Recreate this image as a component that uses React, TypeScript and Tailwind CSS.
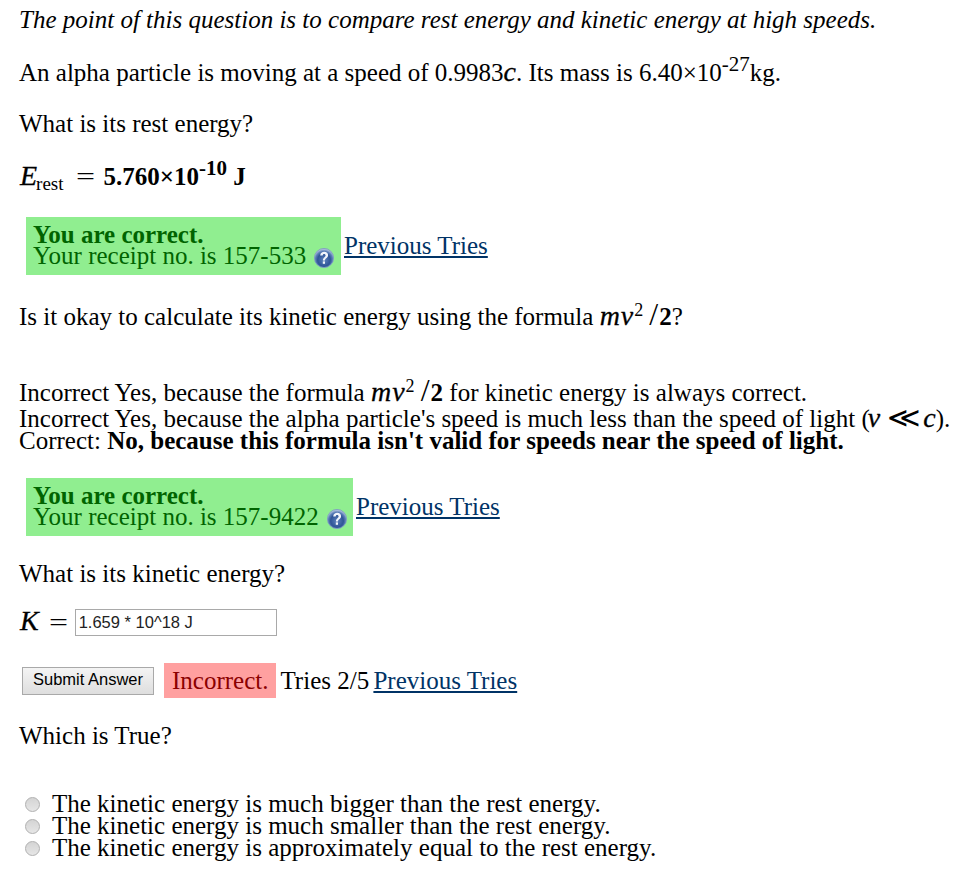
import React from "react";

const HelpIcon = ({ id }: { id: string }) => (
  <svg width="20" height="20" viewBox="0 0 20 20" className="inline-block align-[-4px] ml-[2px]">
    <defs>
      <radialGradient id={id} cx="50%" cy="60%" r="55%">
        <stop offset="0%" stopColor="#5d82bd" />
        <stop offset="60%" stopColor="#2f5597" />
        <stop offset="82%" stopColor="#5c7fb8" />
        <stop offset="100%" stopColor="#a9bcdb" />
      </radialGradient>
    </defs>
    <circle cx="10" cy="10" r="9.6" fill={`url(#${id})`} stroke="#7d97c4" strokeWidth="0.8" />
    <path d="M6.2 7.6 C6.2 5 8.2 3.8 10.2 3.8 C12.6 3.8 14.1 5.3 14.1 7.2 C14.1 9.8 11.1 10.2 10.9 12.4 L8.9 12.4 C8.9 9.4 11.6 9.2 11.6 7.4 C11.6 6.5 11 5.9 10.1 5.9 C9.2 5.9 8.7 6.6 8.7 7.6 Z" fill="#f2f5fb" />
    <rect x="8.8" y="13.4" width="2.2" height="2.4" fill="#f2f5fb" />
  </svg>
);

const Correct = ({ receipt, id, width }: { receipt: string; id: string; width: string }) => (
  <div className="flex items-start">
    <div className={`ml-[7px] bg-[#90ee90] text-[#006400] pl-[7px] pt-[7px] h-[58px] leading-[21px] ${width}`}>
      <b className="block">You are correct.</b>
      <span className="block whitespace-nowrap">
        Your receipt no. is {receipt} <HelpIcon id={id} />
      </span>
    </div>
    <a className="ml-[3px] mt-[18px] leading-[22px] text-[#003366] underline whitespace-nowrap">Previous Tries</a>
  </div>
);

const Radio = ({ label }: { label: string }) => (
  <div className="flex items-center h-[22px]">
    <span className="ml-[6px] mr-[12px] w-[15px] h-[15px] rounded-full border border-[#b0b0b0] bg-gradient-to-b from-[#d4d4d4] to-[#e6e6e6]" />
    <span className="whitespace-nowrap">{label}</span>
  </div>
);

const M = ({ children }: { children: React.ReactNode }) => (
  <i className="text-[28px] leading-[0] [-webkit-text-stroke:0.3px_black]">{children}</i>
);

const Eq = () => <span className="inline-block w-[19px] text-center scale-x-[1.35] leading-[0]">=</span>;

const Mv2 = () => (
  <>
    <i className="text-[28px] leading-[0] tracking-[1px] [-webkit-text-stroke:0.3px_black]">mv</i>
    <sup className="text-[18px] leading-[0]">2</sup>
    <span className="inline-block w-[11px] ml-[5px] text-center text-[32px] leading-[0]">/</span>
    <b>2</b>
  </>
);

export default function App() {
  return (
    <div className="w-[979px] h-[875px] overflow-hidden bg-white text-black pl-[19px] text-[25px] leading-[22px] [font-family:'Liberation_Serif',serif]">
      <p className="pt-[9px] italic whitespace-nowrap">The point of this question is to compare rest energy and kinetic energy at high speeds.</p>
      <p className="mt-[31px] whitespace-nowrap">
        An alpha particle is moving at a speed of 0.9983<M>c</M>. Its mass is 6.40×10<sup className="text-[21px] leading-[0]">-27</sup>kg.
      </p>
      <p className="mt-[29px]">What is its rest energy?</p>
      <p className="mt-[31px] whitespace-nowrap">
        <i className="text-[28px] leading-[0] ml-[1px] [-webkit-text-stroke:0.3px_black]">E</i>
        <sub className="text-[19px] leading-[0] -ml-[1px]">rest</sub>
        <span className="ml-[12px] mr-[9px]"><Eq /></span>
        <b>5.760×10<sup className="text-[21px] leading-[0]">-10</sup> J</b>
      </p>
      <div className="mt-[29px]"><Correct receipt="157-533" id="h1" width="w-[315px]" /></div>
      <p className="mt-[31px] whitespace-nowrap">Is it okay to calculate its kinetic energy using the formula <Mv2 />?</p>
      <div className="mt-[54px] whitespace-nowrap">
        <div className="h-[26px]">Incorrect Yes, because the formula <Mv2 /> for kinetic energy is always correct.</div>
        <div>
          Incorrect Yes, because the alpha particle's speed is much less than the speed of light (<span className="-ml-[2px]"><M>v</M></span>
          <span className="inline-block scale-x-[1.15] text-[28px] leading-[0] ml-[9px] mr-[5px]">≪</span><M>c</M>).
        </div>
        <div>Correct: <b>No, because this formula isn't valid for speeds near the speed of light.</b></div>
      </div>
      <div className="mt-[26px]"><Correct receipt="157-9422" id="h2" width="w-[327px]" /></div>
      <p className="mt-[27px]">What is its kinetic energy?</p>
      <div className="mt-[24px] flex items-center h-[27px]">
        <i className="text-[28px] ml-[1px] mr-[10px] pb-[4px] [-webkit-text-stroke:0.3px_black]">K</i>
        <Eq />
        <input readOnly value="1.659 * 10^18 J" className="ml-[7px] w-[202px] h-[27px] border border-[#a9a9a9] px-[3px] text-[16.5px] [font-family:'Liberation_Sans',sans-serif] text-[#222]" />
      </div>
      <div className="mt-[27px] flex items-center h-[35px] whitespace-nowrap">
        <button className="ml-[3px] w-[132px] h-[28px] pb-[3px] border border-[#a9a9a9] bg-gradient-to-b from-[#f4f4f4] to-[#dedede] text-[16.5px] [font-family:'Liberation_Sans',sans-serif] text-black">Submit Answer</button>
        <span className="ml-[10px] h-[35px] px-[8px] leading-[35px] bg-[#ffa0a0] text-[#8b0000]">Incorrect.</span>
        <span className="ml-[4px]">Tries 2/5 <a className="-ml-[2px] text-[#003366] underline">Previous Tries</a></span>
      </div>
      <p className="mt-[27px]">Which is True?</p>
      <div className="mt-[46px]">
        <Radio label="The kinetic energy is much bigger than the rest energy." />
        <Radio label="The kinetic energy is much smaller than the rest energy." />
        <Radio label="The kinetic energy is approximately equal to the rest energy." />
      </div>
    </div>
  );
}
